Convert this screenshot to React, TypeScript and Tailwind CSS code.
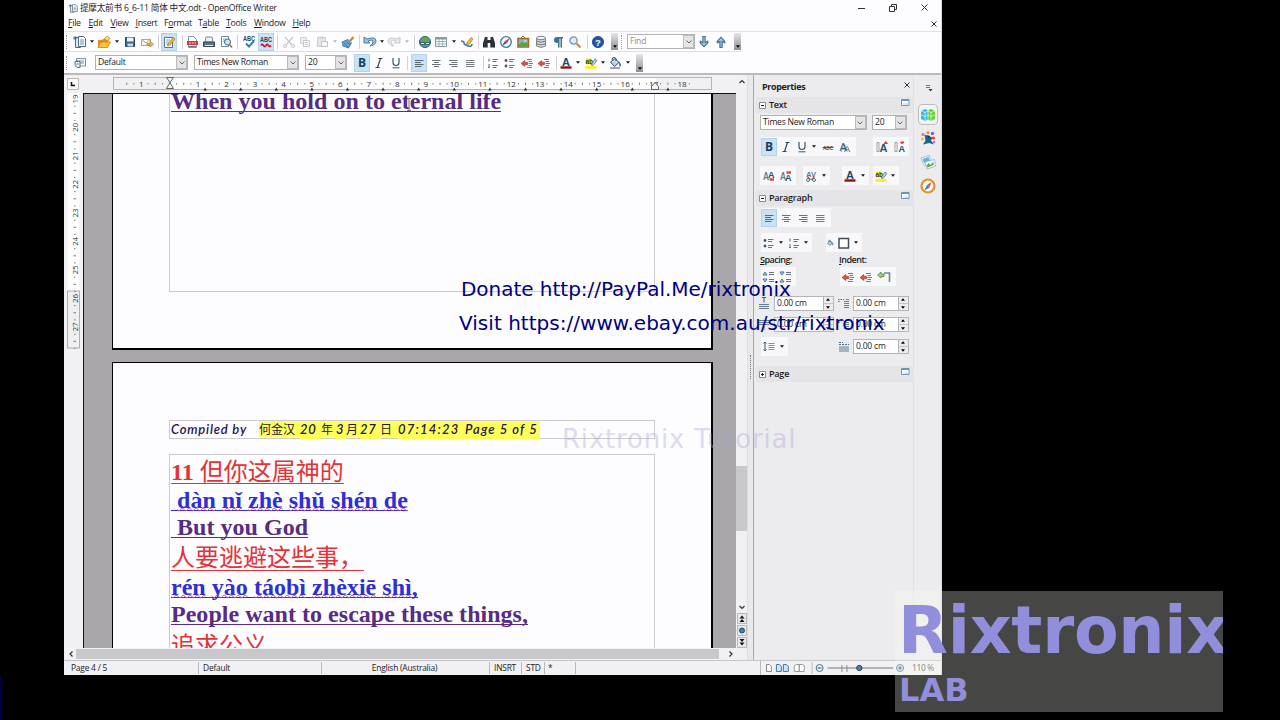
import type { ReactNode } from "react";

const steel = "#3f6f94";

const ICONS: Record<string, ReactNode> = {
  newdoc: (
    <>
      <path d="M3.5 3.5h5v10h-5z" fill="#dfeaf2" stroke="#4b6b80" />
      <path d="M6.5 2.500h5l2 2v8h-7z" fill="#fff" stroke="#4b6b80" />
      <path d="M8 6h4M8 8h4M8 10h4" stroke="#6d93ad" />
      <path d="M1 4h4M3 2v4" stroke="#2f648a" />
    </>
  ),
  open: (
    <>
      <path d="M2 6h4l1-1h5v8H2z" fill="#e8901c" />
      <path d="M4.500 8h10l-3 5.500H2z" fill="#ffc23d" stroke="#c4700b" strokeWidth=".7" />
      <path d="M8 5l3-3 3 2-2 3z" fill="#f6d66d" stroke="#a97b1b" strokeWidth=".6" />
    </>
  ),
  save: (
    <>
      <path d="M3.500 3.500h9v9h-9z" fill="#376a88" stroke="#27485e" />
      <path d="M5 3.500h6.500v4H5z" fill="#eaf3f6" />
      <path d="M5.500 9.500h5.500v3H5.500z" fill="#c5d8e2" />
    </>
  ),
  mail: (
    <>
      <path d="M2.500 5.500h9v6h-9z" fill="#fbf6ea" stroke="#b5a184" />
      <path d="M2.500 5.500L7 9l4.500-3.500" fill="none" stroke="#b5a184" />
      <path d="M8 9.500h3v-2l3.500 2.700-3.500 2.700v-1.700H8z" fill="#f3b25f" stroke="#b96a12" strokeWidth=".6" />
    </>
  ),
  edit: (
    <>
      <path d="M3.500 3.500h8v10h-8z" fill="#fff" stroke="#58758a" />
      <path d="M5 6h4M5 8h3M5 10h5" stroke="#86a3b5" />
      <path d="M7 10l5-6.500 2 1.500-5 6-2.500 1z" fill="#f6bf32" stroke="#8d6415" strokeWidth=".6" />
    </>
  ),
  pdf: (
    <>
      <path d="M4.500 2.500h5l3 3v8h-8z" fill="#fff" stroke="#8795a1" />
      <path d="M3 7h11v4H3z" fill="#cf3a3a" />
      <path d="M5 9h7" stroke="#f5c7c7" strokeDasharray="2 .7" />
      <path d="M5 12.500h7" stroke="#55708c" />
    </>
  ),
  print: (
    <>
      <path d="M5 3h6l1 5H4z" fill="#eef5fa" stroke="#5b7386" strokeWidth=".8" />
      <path d="M2.500 8h11v4.500h-11z" fill="#5f7482" stroke="#354754" />
      <path d="M4 11.500h8" stroke="#dfe9ef" />
    </>
  ),
  preview: (
    <>
      <path d="M3.500 2.500h7v10h-7z" fill="#fff" stroke="#70899a" />
      <path d="M5 5h3M5 7h2" stroke="#8aa" />
      <circle cx="9.500" cy="8" r="3" fill="#cfe6f5" stroke="#3e6a88" />
      <path d="M11.500 10.500l2.500 3" stroke="#9c7a3a" strokeWidth="1.600" />
    </>
  ),
  spell: (
    <>
      <text x="2" y="6.500" fontSize="6.500" fontWeight="700" fontFamily="Liberation Sans" fill="#24485f" textLength="12" lengthAdjust="spacingAndGlyphs">ABC</text>
      <path d="M5 9.500l3 3 5-5.500" fill="none" stroke="#3b79ac" strokeWidth="1.900" />
    </>
  ),
  autospell: (
    <>
      <text x="2" y="7.500" fontSize="6.500" fontWeight="700" fontFamily="Liberation Sans" fill="#24485f" textLength="12" lengthAdjust="spacingAndGlyphs">ABC</text>
      <path d="M3 11.500q1.200-2 2.500 0t2.500 0 2.500 0 2.500 0" fill="none" stroke="#d2222c" strokeWidth="1.900" />
    </>
  ),
  cut: (
    <>
      <path d="M4 3l7 8M12 3l-7 8" stroke="#c8c8cb" strokeWidth="1.200" />
      <circle cx="4" cy="12" r="1.500" fill="none" stroke="#c8c8cb" />
      <circle cx="12" cy="12" r="1.500" fill="none" stroke="#c8c8cb" />
    </>
  ),
  copy: (
    <>
      <path d="M3.500 3.500h6v6h-6z" fill="#eee" stroke="#d0d0d3" />
      <path d="M6.500 6.500h6v6h-6z" fill="#f7f7f7" stroke="#c8c8cb" />
      <path d="M8 8.500h3M8 10.500h3" stroke="#cacacd" />
    </>
  ),
  paste: (
    <>
      <path d="M3.500 3.500h8v9h-8z" fill="#e6e6e6" stroke="#cdcdd0" />
      <path d="M5.500 2.500h4v2h-4z" fill="#d0d0d0" />
      <path d="M7.500 7.500h6v5h-6z" fill="#f7f7f7" stroke="#c3c3c6" />
    </>
  ),
  brush: (
    <>
      <path d="M2 8l6-2.500 3.500 3.500L8.500 14 3 12z" fill="#6aa6d6" stroke="#2d6695" strokeWidth=".8" />
      <path d="M4 9l4 4M6.500 8l4 3" stroke="#2d6695" strokeWidth=".7" />
      <path d="M10 7l3.500-4" stroke="#c98a2b" strokeWidth="2.200" />
    </>
  ),
  undo: (
    <path d="M2 3v6h6L6 7q5-2 5 1 0 2-3 4 6-1 6-5 0-5-9-2z" fill="#9cc4e2" stroke="#3f7199" strokeWidth=".9" />
  ),
  redo: (
    <path d="M14 3v6H8l2-2q-5-2-5 1 0 2 3 4-6-1-6-5 0-5 9-2z" fill="#e9e9ea" stroke="#c5c5c8" strokeWidth=".9" />
  ),
  globe: (
    <>
      <circle cx="8" cy="8" r="5.500" fill="#4d9bb8" stroke="#2c5f61" />
      <path d="M4 5q3-3 8 0l-2 3H6zM4 12l2-3h4l2 3z" fill="#61a846" />
      <path d="M3.500 8.500h4v2h-4zM8.500 8.500h4v2h-4z" fill="#e5eef0" stroke="#30454d" strokeWidth=".8" />
    </>
  ),
  table: (
    <>
      <path d="M2.500 3.500h11v9h-11z" fill="#fff" stroke="#8797a2" />
      <path d="M2.500 4.500h11" stroke="#7d9db3" strokeWidth="2" />
      <path d="M2.500 7.500h11M2.500 10h11M6 4v8.500M9.700 4v8.500" stroke="#8fa0aa" strokeWidth=".8" />
    </>
  ),
  draw: (
    <>
      <path d="M2 7q3 0 3 2t4 3 4-2" fill="none" stroke="#3f7bad" strokeWidth="1.600" />
      <path d="M7 10l5-6.500 2 1.500-4 5.500z" fill="#f5b936" stroke="#9b6a18" strokeWidth=".6" />
    </>
  ),
  find: (
    <path d="M4 3h2.500v3h3V3H12l2 6v4.500H9.300V9H6.700v4.500H2V9z" fill="#2b3238" />
  ),
  compass: (
    <>
      <circle cx="8" cy="8" r="5.300" fill="#f4f8fb" stroke="#44779f" strokeWidth="1.300" />
      <path d="M12 4L9 9 7 7z" fill="#d43b36" />
      <path d="M4 12l3-5 2 2z" fill="#34618c" />
    </>
  ),
  gallery: (
    <>
      <path d="M6 4l2-2 2 2" fill="none" stroke="#845c2d" />
      <path d="M3 4.500h10.500v8.500H3z" fill="#6fbbe0" stroke="#a46a26" strokeWidth="1.600" />
      <path d="M4 10.500l3-3 2 2 2-2 2 3v2H4z" fill="#5da03c" />
      <circle cx="10.500" cy="7" r="1.200" fill="#f7dc4d" />
    </>
  ),
  db: (
    <>
      <path d="M3.500 4v8q4.500 3 9 0V4" fill="#d4d7da" stroke="#74797e" strokeWidth=".9" />
      <ellipse cx="8" cy="4" rx="4.500" ry="1.700" fill="#f0f1f2" stroke="#74797e" strokeWidth=".9" />
      <path d="M3.500 7q4.500 2.500 9 0M3.500 9.700q4.500 2.500 9 0" fill="none" stroke="#74797e" />
    </>
  ),
  pilcrow: (
    <path d="M13 3H7a3 3 0 0 0 0 6h1v4.500h1.500V4.500h1v9H12V4.500h1z" fill="#3c7096" />
  ),
  zoom: (
    <>
      <circle cx="6.500" cy="6.500" r="3.600" fill="#dbecf8" stroke="#6e93b0" strokeWidth="1.300" />
      <path d="M9.500 9.500l4 4" stroke="#c58a35" strokeWidth="2" />
    </>
  ),
  help: (
    <>
      <circle cx="8" cy="8" r="5.600" fill="#2456a6" stroke="#173f7d" strokeWidth=".8" />
      <text x="8" y="11.500" fontSize="9.500" fontWeight="700" textAnchor="middle" fontFamily="Liberation Sans" fill="#fff">?</text>
    </>
  ),
  down: <path d="M6.900 2.500h2.200v6l2.600-1.300v1.500L8 12.800 4.300 8.700V7.200l2.600 1.300z" fill="#a9cde8" stroke={steel} strokeWidth="1.100" />,
  up: <path d="M6.900 13.500h2.200v-6l2.600 1.300V7.300L8 3.200 4.300 7.300v1.500l2.600-1.300z" fill="#a9cde8" stroke={steel} strokeWidth="1.100" />,
  styles: (
    <>
      <path d="M4.500 3.500h9v7.500h-9z" fill="#f4f8fa" stroke="#7b909f" />
      <path d="M7 6h5M8 8h4M4.500 5.500h2" stroke="#7d97aa" />
      <path d="M3 6.500h5v6H5.500L3 10.500z" fill="#e4eef5" stroke="#4b6677" strokeWidth=".9" />
      <path d="M4.500 9h2" stroke="#4b7ea0" />
    </>
  ),
  bold: (
    <text x="8" y="12.200" fontSize="12" fontWeight="700" textAnchor="middle" fontFamily="Open Sans" fill="#173f5c">B</text>
  ),
  italic: (
    <path d="M7.500 3.500h4M4.500 12.500h4M9.500 3.500l-3 9" fill="none" stroke="#2c4a5f" strokeWidth="1.200" />
  ),
  underline: (
    <>
      <path d="M5 3v4.500q0 3 3 3t3-3V3" fill="none" stroke="#3b5569" strokeWidth="1.200" />
      <path d="M4.500 12.800h7" stroke="#3b5569" />
    </>
  ),
  left: <path d="M4 5.500h8.500M4 7.500h6M4 9.500h8.500M4 11.500h6.500" stroke="#5a6871" />,
  center: <path d="M4 5.500h8.500M6 7.500h5M4 9.500h8.500M6 11.500h5" stroke="#687279" />,
  right: <path d="M4 5.500h8.500M6.500 7.500h6M4 9.500h8.500M6.500 11.500h6" stroke="#687279" />,
  justify: <path d="M4 5.500h8.500M4 7.500h8.500M4 9.500h8.500M4 11.500h8.500" stroke="#747b80" strokeWidth="1.200" />,
  numlist: (
    <>
      <path d="M4 3.500v3M4 9v3.500M3 12.500h2" stroke="#4f7d9c" strokeWidth="1.100" />
      <path d="M7.500 4.500h5.500M7.500 6.500h4M7.500 10.500h5.500M7.500 12.500h4" stroke="#6b747a" />
    </>
  ),
  bullets: (
    <>
      <circle cx="4" cy="5.500" r="1.400" fill="#3d586b" />
      <circle cx="4" cy="11" r="1.400" fill="#3d586b" />
      <path d="M7 4.500h5.500M7 6.500h4M7 10.500h5.500M7 12.500h4" stroke="#6b747a" />
    </>
  ),
  dec: (
    <>
      <path d="M8 4.500h5M9.500 6.500h3.500M9.500 8.500h4.500M9.500 10.500h3.500M8 12.500h5" stroke="#4f86ab" />
      <path d="M2 8.500l3.700-3v1.800H8.500v2.400H5.700v1.800z" fill="#d9553f" stroke="#9c3125" strokeWidth=".6" />
    </>
  ),
  fontcolor: (
    <>
      <text x="8" y="10.500" fontSize="11" fontWeight="700" textAnchor="middle" fontFamily="Liberation Sans" fill="#1f4766">A</text>
      <path d="M2.500 12.500h11" stroke="#8c1114" strokeWidth="2.400" />
    </>
  ),
  highlight: (
    <>
      <path d="M2.500 12.500h11" stroke="#f6ee1d" strokeWidth="2.600" />
      <path d="M3 3.500h6v6H3z" fill="#f6ee1d" />
      <text x="2.500" y="9" fontSize="6.500" fontWeight="700" fontFamily="Liberation Sans" fill="#303a40">ab</text>
      <path d="M8 10l4-6 2 1.500-4 5z" fill="#c3ccd1" stroke="#5b6a74" strokeWidth=".7" />
    </>
  ),
  bucket: (
    <>
      <path d="M3.500 7l4.500-3.500 4 4-4.500 4z" fill="#bfd5e5" stroke="#34516a" />
      <path d="M5 5q0-3 2.500-2.500T9 6" fill="none" stroke="#34516a" />
      <path d="M12 7q3 3 1 4.500z" fill="#2e6a9f" stroke="#2e6a9f" strokeWidth=".6" />
      <path d="M3 13h10" stroke="#75818a" strokeWidth="1.400" />
    </>
  ),
  fill: (
    <>
      <path d="M2.500 8l4-3.500 3.500 4-4 3.500z" fill="#bfd5e5" stroke="#34516a" />
      <path d="M4 6q0-3 2-2.500T8 7" fill="none" stroke="#34516a" />
      <path d="M10 7q2.500 3 .8 4.500z" fill="#2e6a9f" stroke="#2e6a9f" strokeWidth=".6" />
    </>
  ),
  strike: (
    <>
      <text x="3" y="10.500" fontSize="5.500" fontWeight="700" fontFamily="Liberation Sans" fill="#444" textLength="10" lengthAdjust="spacingAndGlyphs">ABC</text>
      <path d="M2.500 8.500h11" stroke="#333" strokeWidth=".8" />
    </>
  ),
  shadow: (
    <>
      <text x="3.500" y="12.500" fontSize="11" fontFamily="Liberation Sans" fill="#a7bdcc">A</text>
      <text x="2.500" y="11.500" fontSize="11" fontFamily="Liberation Sans" fill="#315d7d">A</text>
      <text x="7" y="12.500" fontSize="9" fontFamily="Liberation Sans" fill="#315d7d">A</text>
    </>
  ),
  grow: (
    <>
      <path d="M3 3.500h2v9H3z" fill="#fff" stroke="#888" strokeWidth=".8" />
      <text x="5.500" y="13" fontSize="11" fontWeight="700" fontFamily="Liberation Sans" fill="#265373">A</text>
      <path d="M10 4.500h3.500l-1.700-2z" fill="#d04a33" stroke="#d04a33" />
    </>
  ),
  shrink: (
    <>
      <path d="M3 3.500h2v9H3z" fill="#fff" stroke="#888" strokeWidth=".8" />
      <text x="6.500" y="13" fontSize="9" fontWeight="700" fontFamily="Liberation Sans" fill="#265373">A</text>
      <path d="M8.500 3h3.500l-1.700 2z" fill="#d04a33" stroke="#d04a33" />
    </>
  ),
  superA: (
    <>
      <text x="2" y="12" fontSize="10" fontFamily="Liberation Sans" fill="#6d7e89" fontWeight="700" textLength="6" lengthAdjust="spacingAndGlyphs">A</text>
      <text x="7" y="9.500" fontSize="9" fontWeight="700" fontFamily="Liberation Sans" fill="#265373">A</text>
      <path d="M8.500 11.500h4.500" stroke="#d04a33" strokeWidth="2.400" />
    </>
  ),
  subA: (
    <>
      <text x="2" y="12" fontSize="10" fontFamily="Liberation Sans" fill="#6d7e89" fontWeight="700" textLength="6" lengthAdjust="spacingAndGlyphs">A</text>
      <text x="7" y="13" fontSize="9" fontWeight="700" fontFamily="Liberation Sans" fill="#265373">A</text>
      <path d="M8.500 4.500h4.500" stroke="#d04a33" strokeWidth="2.400" />
    </>
  ),
  kern: (
    <>
      <text x="3" y="8.500" fontSize="8" fontWeight="700" fontFamily="Liberation Sans" fill="#5b7d96" textLength="10" lengthAdjust="spacingAndGlyphs">AV</text>
      <path d="M4.500 8.500l3 3.500M11.500 8.500l-3 3.500" stroke="#c0453e" strokeWidth="1.200" />
      <circle cx="5" cy="12" r="1.500" fill="none" stroke="#48779a" />
      <circle cx="11" cy="12" r="1.500" fill="none" stroke="#48779a" />
    </>
  ),
  pspace: (
    <>
      <path d="M2 6l2-3 2 3zM2 10h4l-2 3z" fill="#d5e6f1" stroke="#3f718f" />
      <path d="M8 3.500h5M8 5.500h5M8 10.500h5M8 12.500h5" stroke="#66747d" />
    </>
  ),
  pspace2: (
    <>
      <path d="M2 3h4L4 6zM2 13l2-3 2 3z" fill="#d5e6f1" stroke="#3f718f" />
      <path d="M8 3.500h5M8 5.500h5M8 10.500h5M8 12.500h5" stroke="#66747d" />
    </>
  ),
  hang: (
    <>
      <path d="M1.500 6l3.500-3v2h3v2.500H5V9z" fill="#a6d283" stroke="#4f8b2c" strokeWidth=".8" />
      <path d="M8 4h5.500v9" fill="none" stroke="#668ba5" strokeWidth="1.600" />
    </>
  ),
  border: <path d="M3 3.500h9.500v9.500H3z" fill="#fff" stroke="#41505c" strokeWidth="1.500" />,
  above: (
    <>
      <path d="M6 2.500h4M8 2.500v5" stroke="#405b6d" />
      <path d="M3 9.500h10M3 11.500h10M3 13.500h10" stroke="#607d91" />
    </>
  ),
  below: <path d="M3 4.500h10M3 6.500h10M3 8.500h10M8 10v4" stroke="#607d91" />,
  before: (
    <>
      <path d="M2 4.500h6M2 6.500h2" stroke="#476d88" strokeDasharray="1.500 1" />
      <path d="M10 4.500h3M8 6.500h5M8 8.500h5M8 10.500h5M8 12.500h5" stroke="#607d91" />
    </>
  ),
  first: (
    <>
      <path d="M3 4.500h4M3 6.500h10" stroke="#476d88" strokeDasharray="2 1" />
      <path d="M3 9h10M3 11h10M3 13h10" stroke="#607d91" />
    </>
  ),
  linesp: (
    <>
      <path d="M4 4v9M2.500 5.500L4 4l1.500 1.500M2.500 11.500L4 13l1.500-1.500" fill="none" stroke="#3b5668" />
      <path d="M7.500 5.500h6M7.500 7.500h6M7.500 9.500h6M7.500 11.500h6" stroke="#6f94ad" />
    </>
  ),
  cubes: (
    <>
      <path d="M1 4l4-2 3 1.500v9L5 14l-4-2z" fill="#3cb6e8" />
      <path d="M8 3.500L11 2l4 2v8l-4 2-3-1.500z" fill="#63d12f" />
      <path d="M1 4l4 1.500L8 4l3 1.500L15 4M1 8l4 1.500L8 8l3 1.500L15 8M5 5.500V14M11 5.500V14M8 3.500v9" fill="none" stroke="#e2fbea" strokeWidth=".7" />
    </>
  ),
  splash: (
    <>
      <path d="M4.500 4.500l8 3-1.500 3 3 4-5-1.500-6 1.500 2.500-4z" fill="#1d6488" />
      <path d="M7 5l3 1-1 3z" fill="#173748" />
      <circle cx="3" cy="4.500" r="1.600" fill="#e36bb4" />
      <circle cx="8" cy="2.700" r="1.600" fill="#f19a2b" />
      <circle cx="12.500" cy="3.500" r="1.700" fill="#a44bd1" />
      <circle cx="13.500" cy="8" r="1.600" fill="#e83e30" />
      <circle cx="2.500" cy="9" r="1.500" fill="#f3bf2e" />
      <circle cx="14" cy="12" r="1.300" fill="#c96be0" />
    </>
  ),
  photos: (
    <>
      <path d="M1 4l8-2.500 3 7-8 3z" fill="#f4fafc" stroke="#93a7b1" strokeWidth=".7" />
      <path d="M2.500 5l6-2 1.500 4-6 2z" fill="#5fb5e0" />
      <path d="M5 8l9.500-2.500 1 6.500-8.500 3z" fill="#fff" stroke="#93a7b1" strokeWidth=".7" />
      <path d="M6.500 12l2-3 2 2 3-3.500v3.500l-6 2.500z" fill="#57a846" />
    </>
  ),
  nav: (
    <>
      <circle cx="8" cy="8" r="6.500" fill="#fffaf1" stroke="#e0922a" strokeWidth="2.200" />
      <path d="M11.500 4l-2 5.500L7 7z" fill="#df5735" />
      <path d="M4.500 12.500L7 7l2.500 2.500z" fill="#3b7cc0" />
    </>
  ),
};

function Ic({ n, c = "", on = false }: { n: string; c?: string; on?: boolean }) {
  return (
    <span
      className={`flex h-[18px] w-4 shrink-0 items-center justify-center ${
        on ? "bg-[#c9e2f6] outline outline-1 -outline-offset-1 outline-[#b0d3ee]" : ""
      } ${c}`}
    >
      <svg width="16" height="16" viewBox="0 0 16 16">{ICONS[n]}</svg>
    </span>
  );
}

function Arr({ c = "", dim = false }: { c?: string; dim?: boolean }) {
  return (
    <span className={`flex w-2 shrink-0 justify-center ${c}`}>
      <svg width="4" height="3" viewBox="0 0 4 3">
        <path d="M0 .3h4L2 2.800z" fill={dim ? "#b5b5b5" : "#161616"} />
      </svg>
    </span>
  );
}

const Sep = ({ c }: { c: string }) => <span className={`h-3.5 w-px shrink-0 bg-[#d2d2d5] ${c}`} />;
const Grip = ({ c }: { c: string }) => (
  <span className={`h-3.5 w-[3px] shrink-0 border-l border-dotted border-[#999] ${c}`} />
);
const More = ({ c }: { c: string }) => (
  <span className={`flex w-[7px] shrink-0 items-end justify-center bg-linear-to-b from-[#e6e6e8] to-[#909094] pb-0.5 ${c}`}>
    <svg width="4" height="3"><path d="M0 .3h4L2 2.800z" /></svg>
  </span>
);

function Combo({ text, c, t = "text-[#222]" }: { text: string; c: string; t?: string }) {
  return (
    <span className={`flex h-[15px] shrink-0 items-stretch border border-[#b2b2b5] bg-white ${c}`}>
      <span className={`flex flex-1 items-center overflow-hidden pl-[2px] text-[8.600px] leading-none tracking-[-0.250px] ${t}`}>{text}</span>
      <span className="flex w-[11px] items-center justify-center border border-[#bcbcbf] bg-[#e4e4e6]">
        <svg width="6" height="4" viewBox="0 0 6 4"><path d="M.5.5L3 3 5.500.5" fill="none" stroke="#666" /></svg>
      </span>
    </span>
  );
}

function Spin({ c = "" }: { c?: string }) {
  return (
    <span className={`flex h-[15px] shrink-0 border border-[#b5b5b8] bg-white ${c}`}>
      <span className="flex flex-1 items-center pl-[2px] text-[8.500px] leading-none tracking-[-0.200px]">0.00 cm</span>
      <span className="flex w-[10px] flex-col items-center justify-around border-l border-[#b5b5b8] bg-[#ececee]">
        <svg width="4" height="3"><path d="M0 2.700h4L2 .2z" /></svg>
        <span className="h-px w-full bg-[#c5c5c8]" />
        <svg width="4" height="3"><path d="M0 .3h4L2 2.800z" /></svg>
      </span>
    </span>
  );
}

const MENUS: [string, string][] = [
  ["File", "w-[20.500px]"],
  ["Edit", "w-[22px]"],
  ["View", "w-[25px]"],
  ["Insert", "w-[28.500px]"],
  ["Format", "w-[34px]"],
  ["Table", "w-[28px]"],
  ["Tools", "w-[28px]"],
  ["Window", "w-[38.500px]"],
  ["Help", "w-[20px]"],
];

function HRuler() {
  const nums = Array.from({ length: 18 }, (_, i) => i + 1);
  return (
    <svg width="599" height="16" viewBox="0 0 599 16" className="ml-[34px] shrink-0" fontFamily="Open Sans" fontSize="8" fill="#333">
      <rect x=".5" y="1.500" width="598" height="12" fill="#fdfdfd" stroke="#b4b4b8" />
      <rect x="1" y="2" width="56" height="11" fill="#f1f0f3" />
      <rect x="543" y="2" width="55" height="11" fill="#f1f0f3" />
      <text x="28.400" y="10.600" textAnchor="middle">1</text>
      {nums.map((n) => (
        <text key={n} x={56.500 + n * 28.480} y="10.600" textAnchor="middle">{n}</text>
      ))}
      {Array.from({ length: 80 }, (_, i) => i - 6).filter((i) => i % 4 !== 0 && i <= 75).map((i) => (
        <path key={i} d={`M${56.500 + i * 7.120} ${i % 2 === 0 ? 6.500 : 7}v${i % 2 === 0 ? 2.500 : 1.500}`} stroke="#888" />
      ))}
      {Array.from({ length: 14 }, (_, i) => i + 1).map((i) => (
        <path key={i} d={`M${56.500 + i * 35.600 - 1.700} 14.500h3.400l-1.700-3z`} fill="#333" />
      ))}
      <path d="M53.500 1.500h7l-3.500 5 3.500 6h-7l3.500-6z" fill="#f4f4f6" stroke="#555" strokeWidth=".9" />
      <path d="M538.500 13.500h7v-3l-3.500-4-3.500 4z" fill="#f4f4f6" stroke="#555" strokeWidth=".9" />
    </svg>
  );
}

function VRuler() {
  const nums = [19, 20, 21, 22, 23, 24, 25, 26, 27];
  return (
    <svg width="14" height="256" viewBox="0 0 14 256" className="ml-[3px]" fontFamily="Open Sans" fontSize="8" fill="#333">
      <rect x=".5" y="0" width="12" height="255" fill="#fdfdfd" />
      <rect x=".5" y="198" width="12" height="57" fill="#efeff1" stroke="#b0b0b3" />
      {nums.map((n, i) => (
        <text key={n} transform={`translate(11 ${6 + i * 28.500}) rotate(-90)`} textAnchor="middle">{n}</text>
      ))}
      {nums.map((n, i) => (
        <path key={n} d={`M7 ${13.200 + i * 28.500}h1.500M6.500 ${20.300 + i * 28.500}h2.500M7 ${27.400 + i * 28.500}h1.500`} stroke="#777" />
      ))}
    </svg>
  );
}

const W = ({ children }: { children: ReactNode }) => (
  <span className="underline decoration-[#c94a9a] decoration-wavy decoration-[0.600px] underline-offset-[-1px] [text-decoration-skip-ink:none]">{children}</span>
);

const serif = "font-['Liberation_Serif','Noto_Sans_CJK_SC',serif]";
const latin = `flex w-fit h-[27px] items-end border-b border-current whitespace-pre font-bold text-[24px] leading-[19px] tracking-[0.030px] ${serif}`;

function Doc() {
  return (
    <div className="relative h-[555px] w-[653px] overflow-hidden border-t border-l border-[#111] bg-[#a9a7a9] pl-[28px]">
      <div className="h-[256px] w-[601px] border-r-2 border-b-2 border-l border-black bg-[#fdfcfe]">
        <div className="ml-[56px] h-[198px] w-[486px] border border-t-0 border-[#cbcbce] pl-px">
          <div className={`${latin} !h-[18px] text-[#582c83]`}>When you hold on to eternal life</div>
        </div>
      </div>
      <div className="mt-3 h-[400px] w-[601px] border-t border-r-2 border-l border-black bg-[#fdfcfe] pt-[57px] pl-[56px]">
        <div className="flex h-[19px] w-[486px] items-start border border-[#cbcbce] font-['Lato','Noto_Sans_CJK_SC',sans-serif] text-[13px] leading-[17px] font-semibold text-[#28134a] italic">
          <span className="w-[89px] pl-px tracking-[0.800px] whitespace-nowrap">Compiled by</span>
          <span className="flex h-[16px] bg-[#ffff5c]">
            <span className="w-[41px] text-[12px] font-normal not-italic">何金汉</span>
            <span className="h-[18px] w-[21px] bg-[#ffff5c] tracking-[0.600px]">20</span>
            <span className="w-[15px] text-[12px] font-normal not-italic">年</span>
            <span className="h-[18px] w-[10px] bg-[#ffff5c]">3</span>
            <span className="w-[14px] text-[12px] font-normal not-italic">月</span>
            <span className="h-[18px] w-[20px] bg-[#ffff5c] tracking-[0.600px]">27</span>
            <span className="w-[18px] text-[12px] font-normal not-italic">日</span>
            <span className="h-[18px] w-[67px] bg-[#ffff5c] tracking-[1.200px]">07:14:23</span>
            <span className="h-[18px] w-[75px] bg-[#ffff5c] tracking-[1.100px] whitespace-nowrap">Page 5 of 5</span>
          </span>
        </div>
        <div className="mt-[15px] h-[400px] w-[486px] border border-[#cbcbce] pl-px">
          <div className={`flex h-[29px] w-fit items-end border-b border-current text-[24px] leading-[22px] whitespace-pre text-[#e23336] ${serif}`}>
            <b>11 </b>但你这属神的
          </div>
          <div className={`${latin} text-[#2e2fd4]`}>
            <span> <W>dàn</W> <W>nǐ</W> <W>zhè</W> <W>shǔ</W> <W>shén</W> <W>de</W></span>
          </div>
          <div className={`${latin} text-[#582c83]`}> But you God</div>
          <div className={`flex h-[33px] w-[193px] items-end border-b border-current text-[24px] leading-[23px] text-[#e23336] ${serif}`}>
            人要逃避这些事，
          </div>
          <div className={`${latin} text-[#2e2fd4]`}>
            <span><W>rén</W> <W>yào</W> <W>táobì</W> <W>zhèxiē</W> <W>shì</W>,</span>
          </div>
          <div className={`${latin} text-[#582c83]`}>People want to escape these things,</div>
          <div className={`pt-[5px] text-[24px] leading-[32px] text-[#e23336] ${serif}`}>追求公义</div>
        </div>
      </div>
      <svg width="6" height="14" className="absolute top-[4px] left-[322px]">
        <path d="M1 .5h4M3 .5v12M1 12.500h4" stroke="#777" fill="none" />
      </svg>
    </div>
  );
}

function Section({ title, open = true, c = "" }: { title: string; open?: boolean; c?: string }) {
  return (
    <div className={`flex h-[16px] shrink-0 items-center bg-[#e5e4e7] pr-[3px] pl-[3px] ${c}`}>
      <svg width="7" height="7" viewBox="0 0 7 7">
        <path d="M.5.5h6v6h-6z" fill="#fafafa" stroke="#8c8c8f" />
        <path d={open ? "M2 3.500h3" : "M2 3.500h3M3.500 2v3"} stroke="#222" />
      </svg>
      <span className="ml-[3px] flex-1 text-[9px] font-semibold tracking-[-0.200px]">{title}</span>
      <svg width="9" height="8" viewBox="0 0 9 8" className="mb-1">
        <path d="M.5.5h7.500v6H.5z" fill="#fff" stroke="#6e93bd" />
        <path d="M1 1.500h7" stroke="#6e93bd" />
        <path d="M2 5h5" stroke="#bdd0e4" />
      </svg>
    </div>
  );
}

const Group = ({ c = "", children }: { c?: string; children: ReactNode }) => (
  <span className={`flex h-[19px] shrink-0 items-center bg-[#f8f8fa] ${c}`}>{children}</span>
);

function Sidebar() {
  return (
    <div className="flex w-[189px] border-l border-[#a8a8ab] bg-[#ececee]">
      <div className="flex w-[160px] flex-col border-r border-[#e2e2e5] pl-[2px]">
        <div className="flex h-[22px] shrink-0 items-center justify-between pt-[2px] pr-[3px] pl-[6px]">
          <span className="text-[9px] font-bold tracking-[-0.350px]">Properties</span>
          <svg width="6" height="6" viewBox="0 0 6 6" className="mb-[5px]"><path d="M.5.5l5 5M5.500.5l-5 5" stroke="#333" /></svg>
        </div>
        <Section title="Text" />
        <div className="mt-[2px] flex pl-[4px]">
          <Combo text="Times New Roman" c="w-[107px]" />
          <Combo text="20" c="ml-[5px] w-[35px]" />
        </div>
        <div className="mt-[7px] flex pl-[5px]">
          <Group c="w-[95px]"><Ic n="bold" on /><Ic n="italic" c="ml-px" /><Ic n="underline" /><Arr /><Ic n="strike" c="ml-0.5" /><Ic n="shadow" c="ml-px" /></Group>
          <Group c="ml-[17px] w-[36px]"><Ic n="grow" c="ml-px" /><Ic n="shrink" c="ml-[2px]" /></Group>
        </div>
        <div className="mt-[10px] flex pl-[4px]">
          <Group c="w-[36px]"><Ic n="superA" c="ml-px" /><Ic n="subA" c="ml-px" /></Group>
          <Group c="ml-[7px] w-[27px]"><Ic n="kern" /><Arr c="ml-px" /></Group>
          <Group c="ml-[12px] w-[27px]"><Ic n="fontcolor" /><Arr c="ml-px" /></Group>
          <Group c="ml-[4px] w-[26px]"><Ic n="highlight" /><Arr /></Group>
        </div>
        <Section title="Paragraph" c="mt-[5px]" />
        <div className="mt-[2px] flex pl-[5px]">
          <Group c="w-[70px]"><Ic n="left" on /><Ic n="center" c="ml-px" /><Ic n="right" c="ml-px" /><Ic n="justify" c="ml-px" /></Group>
        </div>
        <div className="mt-[6px] flex pl-[5px]">
          <Group c="w-[51px]"><Ic n="bullets" /><Arr /><Ic n="numlist" c="ml-px" /><Arr /></Group>
          <Group c="ml-[14px] w-[36px]"><Ic n="fill" c="!w-[10px]" /><Ic n="border" /><Arr /></Group>
        </div>
        <div className="flex h-[15px] items-center pb-px pl-[4px] text-[9px] leading-none font-semibold tracking-[-0.500px]">
          <span className="w-[79px]"><u>S</u>pacing:</span>
          <span><u>I</u>ndent:</span>
        </div>
        <div className="flex pl-[5px]">
          <Group c="w-[35px]"><Ic n="pspace" /><Ic n="pspace2" c="ml-px" /></Group>
          <Group c="ml-[44px] w-[56px]"><Ic n="dec" /><Ic n="dec" c="ml-[2px]" /><Ic n="hang" c="ml-[2px]" /></Group>
        </div>
        <div className="mt-[8px] flex h-[18px] items-center">
          <Ic n="above" /><Spin c="ml-[2px] w-[60px]" /><Ic n="before" c="ml-[2px]" /><Spin c="ml-px w-[56px]" />
        </div>
        <div className="mt-[3px] flex h-[18px] items-center">
          <Ic n="below" /><Spin c="ml-[2px] w-[60px]" /><Ic n="before" c="ml-[2px]" /><Spin c="ml-px w-[56px]" />
        </div>
        <div className="mt-[3px] flex h-[20px] items-center pl-[5px]">
          <Group c="w-[27px]"><Ic n="linesp" /><Arr c="ml-px" /></Group>
          <Ic n="first" c="ml-[48px]" /><Spin c="ml-px w-[56px]" />
        </div>
        <Section title="Page" open={false} c="mt-[10px]" />
      </div>
      <div className="flex flex-1 flex-col items-center pl-[2px]">
        <svg width="8" height="8" viewBox="0 0 8 8" className="mt-[9px] ml-[2px]">
          <path d="M1 1.500h4M1 3.500h4" stroke="#777" /><path d="M3.500 5h4L5.500 7.500z" fill="#333" />
        </svg>
        <span className="mt-[12px] flex h-[21px] w-[20px] items-center justify-center rounded-sm border border-[#bdbdc0] bg-[#f4f4f6]"><Ic n="cubes" /></span>
        <Ic n="splash" c="mt-[4px]" />
        <Ic n="photos" c="mt-[6px]" />
        <Ic n="nav" c="mt-[6px]" />
      </div>
    </div>
  );
}

function Status() {
  return (
    <div className="flex h-[15px] shrink-0 items-center border-t border-[#c5c5c8] bg-[#f1f0f3] text-[8.400px] leading-none tracking-[-0.200px] text-[#222]">
      <span className="w-[134px] pl-[7px]">Page 4 / 5</span>
      <span className="w-[123px] border-l border-[#b9b9bc] py-0.5 pl-[4px]">Default</span>
      <span className="w-[168px] border-l border-[#b9b9bc] py-0.5 pr-[2px] text-center">English (Australia)</span>
      <span className="w-[32px] border-l border-[#b9b9bc] py-0.5 pl-[4px]">INSRT</span>
      <span className="w-[23px] border-l border-[#b9b9bc] py-0.5 pl-[4px]">STD</span>
      <span className="w-[31px] border-l border-[#b9b9bc] py-0.5 pl-[3px]">*</span>
      <span className="h-3 w-[185px] border-l border-[#b9b9bc]" />
      <svg width="149" height="14" viewBox="-1 0 149 14" className="border-l border-[#b9b9bc]">
        <path d="M4.500 3.500h3l2 2v5h-5z" fill="#fff" stroke="#888" />
        <path d="M14.500 3.500h3l2 2v5h-5zM21.500 3.500h3l2 2v5h-5z" fill="#cfe5f5" stroke="#3b75a5" />
        <path d="M32.500 4.500l2-1h3v7h-5zM37.500 3.500h3l2 1v6h-5z" fill="#fff" stroke="#999" />
        <path d="M50.500 1v12M148.500 1v12" stroke="#b9b9bc" />
        <circle cx="58" cy="7" r="3.500" fill="#eaf4fa" stroke={steel} />
        <path d="M56 7h4" stroke="#24506f" />
        <path d="M66 7h66" stroke="#777" />
        <path d="M80.500 4v7M85.500 4v7" stroke="#888" />
        <circle cx="98" cy="7" r="2.700" fill="#4880a3" stroke="#244a63" />
        <circle cx="139" cy="7" r="3.500" fill="#eaf4fa" stroke={steel} />
        <path d="M137 7h4M139 5v4" stroke="#24506f" />
      </svg>
      <span className="pl-[3px] tracking-[-0.300px] text-[#555]">110 %</span>
    </div>
  );
}

export default function App() {
  return (
    <div className="relative flex h-[720px] w-[1280px] overflow-hidden bg-black pl-16 font-['Open_Sans','Noto_Sans_CJK_SC',sans-serif] text-[9px] text-[#1d1d1f]">
      <div className="flex h-[675px] w-[878px] flex-col border-r border-[#dadadc] bg-[#fdfcfe]">
        <div className="flex h-[16px] shrink-0 items-center">
          <svg width="11" height="11" viewBox="0 0 16 16" className="ml-[4px]">{ICONS.newdoc}</svg>
          <span className="ml-px flex-1 text-[8.600px] leading-none tracking-[-0.220px]">提摩太前书 6_6-11 简体 中文.odt - OpenOffice Writer</span>
          <svg width="72" height="10" viewBox="0 0 72 10" className="mr-[12px]" fill="none" stroke="#333">
            <path d="M1 5.500h7" />
            <path d="M32.500 3.500h5v5h-5zM34.500 3V1.500h5v5H38M64.500 1.500l6 6M70.500 1.500l-6 6" />
          </svg>
        </div>
        <div className="flex h-[15px] shrink-0 items-center pl-1 tracking-[-0.300px]">
          {MENUS.map(([m, w]) => {
            const at = m === "Format" || m === "Table" ? 1 : 0;
            return (
              <span key={m} className={`${w} shrink-0 text-[8.800px] leading-none`}>
                {m.slice(0, at)}<u>{m[at]}</u>{m.slice(at + 1)}
              </span>
            );
          })}
          <span className="flex-1" />
          <svg width="6" height="6" viewBox="0 0 6 6" className="mr-[4px]"><path d="M.5.5l5 5M5.500.5l-5 5" stroke="#333" /></svg>
        </div>
        <div className="flex h-[21px] shrink-0 items-center border-t border-[#e3e2e5]">
          <div className="flex h-[20px] items-center border-b border-[#dddce0]">
            <Grip c="ml-[2px]" />
            <Ic n="newdoc" c="ml-[3px]" /><Arr /><Ic n="open" /><Arr c="ml-px" /><Ic n="save" c="ml-px" /><Ic n="mail" c="ml-px" />
            <Sep c="ml-[3px]" /><Ic n="edit" c="ml-[2px]" on /><Sep c="ml-[5px]" />
            <Ic n="pdf" c="ml-px" /><Ic n="print" c="ml-px" /><Ic n="preview" c="ml-px" /><Sep c="ml-[3px]" />
            <Ic n="spell" c="ml-[3px]" /><Ic n="autospell" c="ml-px" on /><Sep c="ml-[3px]" />
            <Ic n="cut" c="ml-[3px]" /><Ic n="copy" /><Ic n="paste" c="ml-px" /><Arr c="ml-px" dim /><Ic n="brush" c="ml-px" /><Sep c="ml-[3px]" />
            <Ic n="undo" c="ml-[2px]" /><Arr /><Ic n="redo" /><Arr c="ml-px" dim /><Sep c="ml-[3px]" />
            <Ic n="globe" c="ml-[2px]" /><Ic n="table" /><Arr c="ml-px" /><Ic n="draw" c="ml-px" /><Sep c="ml-[3px]" />
            <Ic n="find" c="ml-[2px]" /><Ic n="compass" c="ml-px" /><Ic n="gallery" c="ml-px" /><Ic n="db" c="ml-[2px]" /><Ic n="pilcrow" c="ml-px" /><Ic n="zoom" c="ml-px" />
            <Sep c="ml-[4px]" /><Ic n="help" c="ml-[2px]" /><More c="ml-[5px] h-[17px]" />
            <Grip c="ml-[3px]" />
            <Combo text="Find" c="ml-[3px] w-[68px]" t="text-[#8d8d90]" />
            <Ic n="down" c="ml-px" /><Ic n="up" c="ml-px" /><More c="ml-[5px] h-[17px]" />
          </div>
        </div>
        <div className="flex h-[23px] shrink-0 items-center border-b-2 border-[#bcbabd]">
          <Grip c="ml-[2px]" />
          <Ic n="styles" c="ml-[3px]" />
          <Combo text="Default" c="ml-[7px] w-[93px]" />
          <Combo text="Times New Roman" c="ml-[6px] w-[105px]" />
          <Combo text="20" c="ml-[6px] w-[42px]" />
          <Ic n="bold" c="ml-[7px]" on /><Ic n="italic" c="ml-px" /><Ic n="underline" c="ml-px" /><Sep c="ml-[3px]" />
          <Ic n="left" c="ml-[3px]" on /><Ic n="center" c="ml-px" /><Ic n="right" c="ml-px" /><Ic n="justify" c="ml-px" /><Sep c="ml-[5px]" />
          <Ic n="numlist" c="ml-px" /><Ic n="bullets" c="ml-px" /><Ic n="dec" c="ml-px" /><Ic n="dec" c="ml-px" /><Sep c="ml-[4px]" />
          <Ic n="fontcolor" c="ml-px" /><Arr /><Ic n="highlight" c="ml-px" /><Arr /><Ic n="bucket" /><Arr c="ml-px" />
          <More c="ml-[4px] h-[18px]" />
        </div>
        <div className="flex min-h-0 flex-1 bg-[#f1f0f3]">
          <div className="flex w-[672px] flex-col">
            <div className="flex h-[18px] shrink-0 items-center pb-px">
              <svg width="12" height="12" viewBox="0 0 12 12" className="ml-[3px]">
                <path d="M.5.5h11v11H.5z" fill="#fafafa" stroke="#bbb" /><path d="M4.500 4v3.500H8" fill="none" stroke="#111" strokeWidth="1.500" />
              </svg>
              <HRuler />
            </div>
            <div className="flex h-[555px] shrink-0">
              <div className="w-[19px] shrink-0"><VRuler /></div>
              <Doc />
            </div>
            <div className="flex h-[11px] shrink-0 items-center">
              <svg width="12" height="8" viewBox="0 0 12 8"><path d="M8.500 1.500L6 4l2.500 2.500" fill="none" stroke="#333" strokeWidth="1.200" /></svg>
              <span className="h-[10px] w-[643px] bg-[#c9c8ca]" />
              <svg width="16" height="8" viewBox="0 0 16 8"><path d="M10.500 1.500L13 4l-2.500 2.500" fill="none" stroke="#333" strokeWidth="1.200" /></svg>
            </div>
          </div>
          <div className="flex w-[11px] flex-col items-center pt-[4px]">
            <svg width="6" height="5" viewBox="0 0 6 5"><path d="M.5 4L3 1.500 5.500 4" fill="none" stroke="#333" strokeWidth="1.200" /></svg>
            <span className="mt-[382px] h-[65px] w-[11px] bg-[#c9c8ca]" />
            <svg width="6" height="5" viewBox="0 0 6 5" className="mt-[74px]"><path d="M.5 1L3 3.500 5.500 1" fill="none" stroke="#333" strokeWidth="1.200" /></svg>
            <svg width="11" height="36" viewBox="-1 0 11 36" className="mt-[3px]">
              <path d="M.5.5h9v10h-9zM.5 12.500h9v10h-9zM.5 24.500h9v10h-9z" fill="#e9e9eb" stroke="#b7b7ba" />
              <path d="M2.500 5.500h5L5 2.500zM2.500 9h5L5 6zM2.500 26h5L5 29zM2.500 29.500h5L5 32.500z" fill="#111" />
              <circle cx="5" cy="17.500" r="2.500" fill="#4880a3" stroke="#244a63" />
            </svg>
          </div>
          <div className="flex w-[6px] flex-col border-l border-[#dddde0] bg-[#e9e8eb] pt-[280px] pl-[2px]">
            <span className="h-[24px] w-px border-l border-dotted border-[#777]" />
          </div>
          <Sidebar />
        </div>
        <Status />
      </div>

      <div className="absolute top-[675px] left-0 h-[45px] w-px bg-[#000048]" />
      <div className="absolute top-[277px] left-[461px] font-['DejaVu_Sans',sans-serif] text-[20px] leading-[24px] tracking-[-0.030px] whitespace-nowrap text-[#00007f]">Donate http://PayPal.Me/rixtronix</div>
      <div className="absolute top-[311px] left-[459px] font-['DejaVu_Sans',sans-serif] text-[20px] leading-[24px] tracking-[0.030px] whitespace-nowrap text-[#00007f]">Visit https://www.ebay.com.au/str/rixtronix</div>
      <div className="absolute top-[422px] left-[562px] font-['DejaVu_Sans',sans-serif] text-[26px] leading-[34px] tracking-[0.800px] whitespace-nowrap text-[#a9a6d8]/40">Rixtronix Tutorial</div>
      <div className="absolute top-[591px] left-[895px] h-[121px] w-[328px] overflow-hidden bg-[#fdfff6]/28 font-['DejaVu_Sans',sans-serif] font-bold text-[#918edb]">
        <div className="mt-[2px] ml-[3px] text-[65px] leading-[76px] tracking-[-0.300px] whitespace-nowrap">Rixtronix</div>
        <div className="mt-[2px] ml-[4px] text-[32px] leading-[38px]">LAB</div>
      </div>
    </div>
  );
}
